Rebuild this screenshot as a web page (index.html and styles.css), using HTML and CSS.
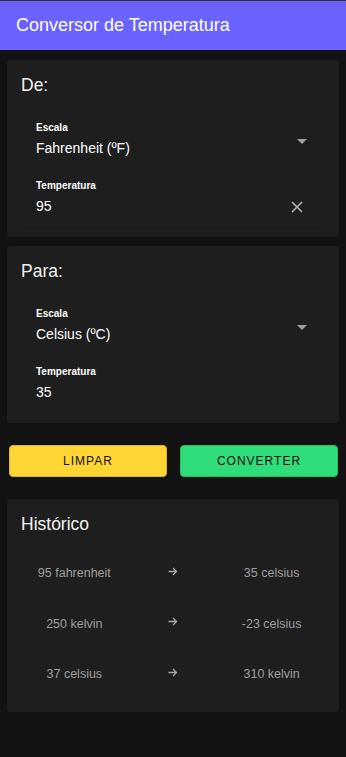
FILE: index.html
```html
<!DOCTYPE html>
<html lang="pt">
<head>
<meta charset="utf-8">
<title>Conversor de Temperatura</title>
<link rel="stylesheet" href="styles.css">
</head>
<body>
<header class="appbar">Conversor de Temperatura</header>
<main class="content">
  <section class="card">
    <h2 class="card-title">De:</h2>
    <div class="field field-select">
      <div class="field-label">Escala</div>
      <div class="field-value">Fahrenheit (ºF)</div>
      <svg class="caret" width="10" height="5" viewBox="0 0 10 5"><path d="M0 0 L10 0 L5 5 Z" fill="#a0a0a0"/></svg>
    </div>
    <div class="field">
      <div class="field-label">Temperatura</div>
      <div class="field-value">95</div>
      <svg class="clear" width="12" height="12" viewBox="0 0 12 12"><path d="M1 1 L11 11 M11 1 L1 11" stroke="#b4b4b4" stroke-width="1.6" fill="none"/></svg>
    </div>
  </section>

  <section class="card">
    <h2 class="card-title">Para:</h2>
    <div class="field field-select">
      <div class="field-label">Escala</div>
      <div class="field-value">Celsius (ºC)</div>
      <svg class="caret" width="10" height="5" viewBox="0 0 10 5"><path d="M0 0 L10 0 L5 5 Z" fill="#a0a0a0"/></svg>
    </div>
    <div class="field">
      <div class="field-label">Temperatura</div>
      <div class="field-value">35</div>
    </div>
  </section>

  <div class="actions">
    <button class="btn btn-yellow">LIMPAR</button>
    <button class="btn btn-green">CONVERTER</button>
  </div>

  <section class="card history">
    <h2 class="card-title">Histórico</h2>
    <div class="hist-row">
      <span>95 fahrenheit</span>
      <svg class="arrow" width="10" height="9" viewBox="0 0 10 9"><path d="M0.5 4.5 H8.5 M5 1 L8.5 4.5 L5 8" stroke="#a8a8a8" stroke-width="1.3" fill="none"/></svg>
      <span>35 celsius</span>
    </div>
    <div class="hist-row">
      <span>250 kelvin</span>
      <svg class="arrow" width="10" height="9" viewBox="0 0 10 9"><path d="M0.5 4.5 H8.5 M5 1 L8.5 4.5 L5 8" stroke="#a8a8a8" stroke-width="1.3" fill="none"/></svg>
      <span>-23 celsius</span>
    </div>
    <div class="hist-row">
      <span>37 celsius</span>
      <svg class="arrow" width="10" height="9" viewBox="0 0 10 9"><path d="M0.5 4.5 H8.5 M5 1 L8.5 4.5 L5 8" stroke="#a8a8a8" stroke-width="1.3" fill="none"/></svg>
      <span>310 kelvin</span>
    </div>
  </section>
</main>
</body>
</html>
```
FILE: styles.css
```css
* { box-sizing: border-box; }
html, body { margin: 0; padding: 0; }
body {
  background: #121212;
  font-family: "Liberation Sans", Arial, sans-serif;
  color: #fff;
  min-height: 757px;
}
.appbar {
  border-top: 1px solid #2e2e2e;
  height: 50px;
  background: #6b63ff;
  color: #fff;
  font-size: 18px;
  display: flex;
  align-items: center;
  padding-left: 16px;
}
.content {
  padding: 10px 7px 0 7px;
}
.card {
  background: #1e1e1e;
  border-radius: 4px;
  padding: 14px 14px 12px 14px;
  margin-bottom: 9px;
}
.card-title {
  margin: 0;
  font-size: 17.5px;
  font-weight: normal;
  line-height: 22px;
  color: #f2f2f2;
}
.field {
  position: relative;
  padding: 7px 15px 8px 15px;
  border-bottom: 1px solid #212121;
}
.field-select {
  margin-top: 18px;
  padding-bottom: 13px;
}
.field-label {
  font-size: 10px;
  font-weight: bold;
  line-height: 14px;
  color: #fff;
}
.field-value {
  margin-top: 3px;
  font-size: 14px;
  line-height: 20px;
  color: #fff;
}
.caret {
  position: absolute;
  right: 18px;
  top: 25px;
}
.clear {
  position: absolute;
  right: 22px;
  top: 29px;
}
.actions {
  display: flex;
  gap: 13px;
  padding: 0 1px 0 2px;
  margin-top: 22px;
  margin-bottom: 22px;
}
.btn {
  flex: 1;
  height: 32px;
  border-radius: 4px;
  font-family: "Liberation Sans", Arial, sans-serif;
  font-size: 12px;
  letter-spacing: 1px;
  color: #111;
  padding: 0;
}
.btn-yellow {
  background: #ffd633;
  border: 1px solid #d9b52a;
}
.btn-green {
  background: #2fdd7a;
  border: 1px solid #27bd67;
}
.history {
  padding-bottom: 12px;
}
.hist-row {
  display: grid;
  grid-template-columns: 1fr 1fr 1fr;
  align-items: center;
  justify-items: center;
  height: 50.5px;
  padding: 0 4px;
  font-size: 12.5px;
  color: #9e9e9e;
}
.hist-row:first-of-type {
  margin-top: 13px;
}
.arrow {
  position: relative;
  top: -2px;
}
```
